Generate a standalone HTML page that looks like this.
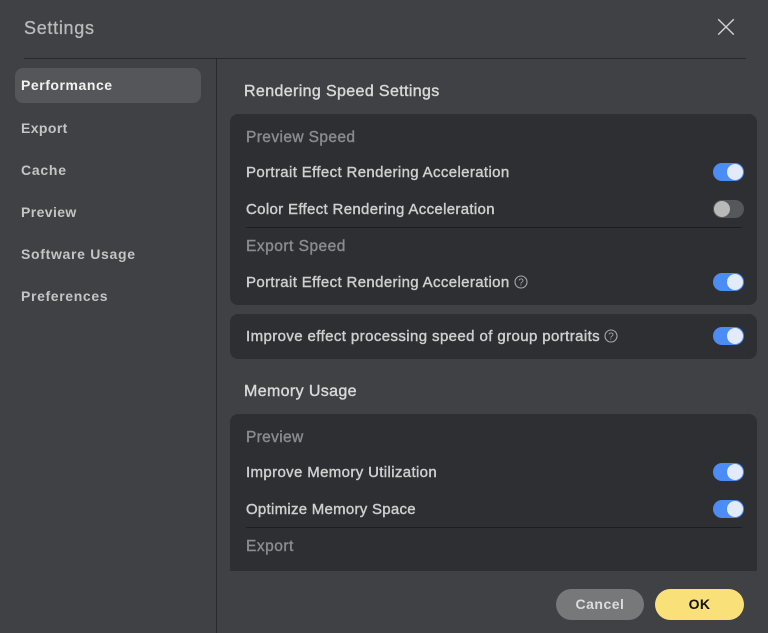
<!DOCTYPE html>
<html><head><meta charset="utf-8"><style>
html,body{margin:0;padding:0}
body{width:768px;height:633px;overflow:hidden;background:#404145;position:relative;font-family:"Liberation Sans",sans-serif}
.a{position:absolute}
.t{position:absolute;white-space:nowrap;line-height:20px;font-size:15px;color:#cfcfd0;letter-spacing:.36px;-webkit-text-stroke:.4px #cfcfd0}
.n{position:absolute;left:21px;white-space:nowrap;line-height:20px;font-size:14px;font-weight:bold;color:#c4c4c5;letter-spacing:.55px}
.h{position:absolute;left:244px;white-space:nowrap;line-height:20px;font-size:16px;color:#d8d8d9;letter-spacing:.37px;-webkit-text-stroke:.4px #d8d8d9}
.s{position:absolute;left:246px;white-space:nowrap;line-height:20px;font-size:15.5px;color:#8a8b8d;letter-spacing:.34px;-webkit-text-stroke:.4px #8a8b8d}
.p{position:absolute;background:#2e2f33;left:230px;width:527px}
.l{position:absolute;left:246px;width:496px;height:1px;background:#1c1d20}
.g{position:absolute;left:713px;width:31px;height:18px;border-radius:9px;background:#4c8df5}
.g:after{content:"";position:absolute;left:14px;top:1px;width:16px;height:16px;border-radius:50%;background:#e3ebfb}
.g.o{background:#56575a}
.g.o:after{left:1px;background:#b9b9ba}
svg{position:absolute}
</style></head><body>
<div class="t" style="left:24px;top:18px;font-size:18px;color:#b9babb;-webkit-text-stroke:.3px #b9babb;letter-spacing:.7px">Settings</div>
<svg style="left:716px;top:17px" width="20" height="20" viewBox="0 0 20 20"><path d="M2.2 2.2L17.8 17.6M17.8 2.2L2.2 17.6" stroke="#d2d2d3" stroke-width="1.4" fill="none"/></svg>
<div class="a" style="left:24px;top:58px;width:722px;height:1px;background:#28292c"></div>
<div class="a" style="left:216px;top:59px;width:1px;height:574px;background:#28292c"></div>

<div class="a" style="left:15px;top:68px;width:186px;height:35px;border-radius:8px;background:#54565a"></div>
<div class="n" style="top:75px;color:#f2f2f2">Performance</div>
<div class="n" style="top:117.5px;letter-spacing:.4px">Export</div>
<div class="n" style="top:159.5px;letter-spacing:.75px">Cache</div>
<div class="n" style="top:201.5px;letter-spacing:.4px">Preview</div>
<div class="n" style="top:243.5px;letter-spacing:.69px">Software Usage</div>
<div class="n" style="top:285.5px;letter-spacing:.64px">Preferences</div>

<div class="h" style="top:81.5px">Rendering Speed Settings</div>
<div class="p" style="top:114px;height:191px;border-radius:8px"></div>
<div class="s" style="top:127.5px;letter-spacing:.4px">Preview Speed</div>
<div class="t" style="left:246px;top:163px">Portrait Effect Rendering Acceleration</div>
<div class="g" style="top:163px"></div>
<div class="t" style="left:246px;top:200px;letter-spacing:.33px">Color Effect Rendering Acceleration</div>
<div class="g o" style="top:200px"></div>
<div class="l" style="top:227px"></div>
<div class="s" style="top:237px;letter-spacing:.5px">Export Speed</div>
<div class="t" style="left:246px;top:273px">Portrait Effect Rendering Acceleration</div>
<svg style="left:514px;top:275px" width="14" height="14" viewBox="0 0 14 14"><circle cx="7" cy="7" r="6" fill="none" stroke="#a8a8a9" stroke-width="1.1"/><text x="7" y="10.5" font-size="10" text-anchor="middle" fill="#a8a8a9" font-family="Liberation Sans">?</text></svg>
<div class="g" style="top:273px"></div>

<div class="p" style="top:314px;height:45px;border-radius:8px"></div>
<div class="t" style="left:246px;top:327px;letter-spacing:.4px">Improve effect processing speed of group portraits</div>
<svg style="left:604px;top:329px" width="14" height="14" viewBox="0 0 14 14"><circle cx="7" cy="7" r="6" fill="none" stroke="#a8a8a9" stroke-width="1.1"/><text x="7" y="10.5" font-size="10" text-anchor="middle" fill="#a8a8a9" font-family="Liberation Sans">?</text></svg>
<div class="g" style="top:327px"></div>

<div class="h" style="top:381.5px">Memory Usage</div>
<div class="p" style="top:414px;height:157px;border-radius:8px 8px 0 0"></div>
<div class="s" style="top:427.5px">Preview</div>
<div class="t" style="left:246px;top:463px">Improve Memory Utilization</div>
<div class="g" style="top:463px"></div>
<div class="t" style="left:246px;top:500px;letter-spacing:.27px">Optimize Memory Space</div>
<div class="g" style="top:500px"></div>
<div class="l" style="top:527px"></div>
<div class="s" style="top:537px;letter-spacing:.5px">Export</div>

<div class="a" style="left:556px;top:589px;width:88px;height:31px;border-radius:16px;background:#77787a;color:#dcdcdd;font-size:14px;font-weight:bold;line-height:31px;text-align:center;letter-spacing:.5px">Cancel</div>
<div class="a" style="left:655px;top:589px;width:89px;height:31px;border-radius:16px;background:#f9e079;color:#111;font-size:14px;font-weight:bold;line-height:31px;text-align:center;letter-spacing:.4px">OK</div>
</body></html>
